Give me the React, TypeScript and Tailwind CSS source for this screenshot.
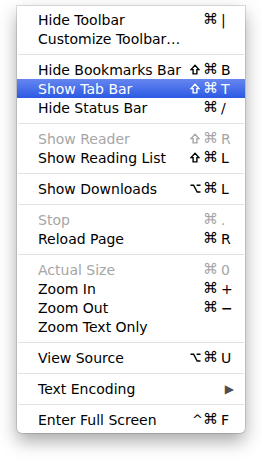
import React from "react";

type Item =
  | { sep: true }
  | {
      sep?: false;
      label: string;
      mods?: string;
      keyc?: string;
      disabled?: boolean;
      selected?: boolean;
      submenu?: boolean;
    };

const items: Item[] = [
  { label: "Hide Toolbar", mods: "⌘", keyc: "|" },
  { label: "Customize Toolbar…" },
  { sep: true },
  { label: "Hide Bookmarks Bar", mods: "⇧⌘", keyc: "B" },
  { label: "Show Tab Bar", mods: "⇧⌘", keyc: "T", selected: true },
  { label: "Hide Status Bar", mods: "⌘", keyc: "/" },
  { sep: true },
  { label: "Show Reader", mods: "⇧⌘", keyc: "R", disabled: true },
  { label: "Show Reading List", mods: "⇧⌘", keyc: "L" },
  { sep: true },
  { label: "Show Downloads", mods: "⌥⌘", keyc: "L" },
  { sep: true },
  { label: "Stop", mods: "⌘", keyc: ".", disabled: true },
  { label: "Reload Page", mods: "⌘", keyc: "R" },
  { sep: true },
  { label: "Actual Size", mods: "⌘", keyc: "0", disabled: true },
  { label: "Zoom In", mods: "⌘", keyc: "+" },
  { label: "Zoom Out", mods: "⌘", keyc: "−" },
  { label: "Zoom Text Only" },
  { sep: true },
  { label: "View Source", mods: "⌥⌘", keyc: "U" },
  { sep: true },
  { label: "Text Encoding", submenu: true },
  { sep: true },
  { label: "Enter Full Screen", mods: "^⌘", keyc: "F" },
];

function Mod({ c }: { c: string }) {
  if (c === "⇧") {
    return (
      <svg width="10" height="11" viewBox="0 0 10 11" className="mr-[3px]">
        <path
          d="M5 1.2 L9 5.6 H6.9 V9.9 H3.1 V5.6 H1 Z"
          fill="none"
          stroke="currentColor"
          strokeWidth="1.4"
          strokeLinejoin="miter"
        />
      </svg>
    );
  }
  if (c === "⌥") {
    return (
      <svg width="11" height="9" viewBox="0 0 11 9" className="mr-[2px]">
        <path d="M0.5 1.2 H3.6 L7.2 8 H10.5 M6.6 1.2 H10.5" fill="none" stroke="currentColor" strokeWidth="1.4" />
      </svg>
    );
  }
  if (c === "^") {
    return <span className="mr-[0px] text-[13px] leading-none">^</span>;
  }
  return <span className="text-[15px] leading-none">⌘</span>;
}

export default function App() {
  return (
    <div
      className="w-[262px] h-[461px] bg-white overflow-hidden"
      style={{ fontFamily: '"DejaVu Sans", "Noto Sans", sans-serif' }}
    >
      <div className="ml-[17px] mt-[6px] w-[228px] bg-white rounded-b-[5px] pt-[4px] pb-[4px] shadow-[0_0_0_1px_rgba(0,0,0,0.12),0_8px_18px_rgba(0,0,0,0.35)]">
        {items.map((it, i) =>
          it.sep ? (
            <div key={i} className="h-[12px] flex items-center px-px">
              <div className="h-px w-full bg-[#e2e2e2]" />
            </div>
          ) : (
            <div
              key={i}
              className={
                "h-[19px] flex items-center pl-[21px] pr-[13px] text-[14px] leading-none " +
                (it.selected
                  ? "bg-gradient-to-b from-[#6686ef] to-[#2c59e4] text-white"
                  : it.disabled
                  ? "text-[#a6a6a6]"
                  : "text-black")
              }
            >
              <span className="flex-1 whitespace-nowrap">{it.label}</span>
              {it.submenu ? (
                <span className="text-[12px] leading-none text-[#505050] mr-[-2px]">▶</span>
              ) : it.mods ? (
                <>
                  <span className="flex items-center justify-end whitespace-nowrap">
                    {Array.from(it.mods).map((c, j) => (
                      <Mod key={j} c={c} />
                    ))}
                  </span>
                  <span
                    className={
                      "w-[14px] pl-[3px] whitespace-nowrap" +
                      (it.keyc === "−" ? " font-bold" : "")
                    }
                  >
                    {it.keyc}
                  </span>
                </>
              ) : null}
            </div>
          )
        )}
      </div>
    </div>
  );
}
